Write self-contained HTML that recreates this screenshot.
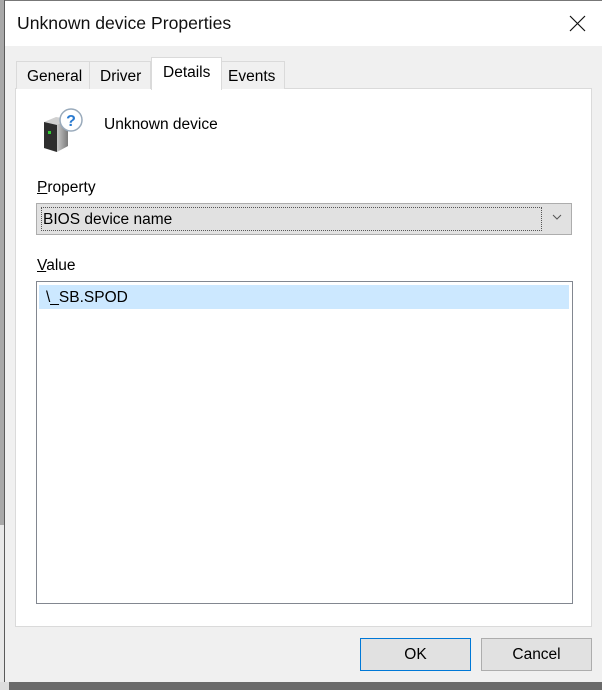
<!DOCTYPE html>
<html><head><style>
*{margin:0;padding:0;box-sizing:border-box}
body{width:602px;height:690px;position:relative;overflow:hidden;background:#f0f0f0;font-family:"Liberation Sans",sans-serif;font-size:15.5px;color:#000}
.a{position:absolute}
</style></head><body>
<div class="a" style="left:0;top:0;width:4px;height:525px;background:#a8a8a8"></div>
<div class="a" style="left:0;top:525px;width:4px;height:165px;background:#e8e8e8"></div>
<div class="a" style="left:4px;top:0;width:1px;height:682px;background:#5a5a5a"></div>
<div class="a" style="left:5px;top:0;width:597px;height:1px;background:#777"></div>
<div class="a" style="left:0;top:682px;width:602px;height:8px;background:#6a6a6a"></div>
<div class="a" style="left:0;top:682px;width:9px;height:8px;background:#ddd"></div>
<div class="a" style="left:5px;top:1px;width:597px;height:45px;background:#fff"></div>
<div class="a" style="left:17px;top:13px;font-size:17.6px;color:#111">Unknown device Properties</div>
<svg class="a" style="left:569px;top:15px" width="17" height="17"><path d="M1 1L16 16M16 1L1 16" stroke="#111" stroke-width="1.2"/></svg>
<div class="a" style="left:5px;top:46px;width:597px;height:636px;background:#f0f0f0"></div>
<div class="a" style="left:15px;top:88px;width:577px;height:539px;background:#fff;border:1px solid #dadada"></div>
<div class="a" style="left:16px;top:61px;width:74px;height:28px;background:#f0f0f0;border:1px solid #dadada;border-bottom:none;padding:6px 0 0 10px">General</div>
<div class="a" style="left:90px;top:61px;width:61px;height:28px;background:#f0f0f0;border:1px solid #dadada;border-bottom:none;border-left:none;padding:6px 0 0 10px">Driver</div>
<div class="a" style="left:222px;top:61px;width:63px;height:28px;background:#f0f0f0;border:1px solid #dadada;border-bottom:none;border-left:none;padding:6px 0 0 6px">Events</div>
<div class="a" style="left:151px;top:57px;width:71px;height:33px;background:#fff;border:1px solid #dadada;border-bottom:none;padding:6px 0 0 11px">Details</div>
<svg class="a" style="left:40px;top:106px" width="46" height="48">
<defs><linearGradient id="g" x1="0" x2="1"><stop offset="0" stop-color="#c8c8c8"/><stop offset="1" stop-color="#7a7a7a"/></linearGradient></defs>
<path d="M4 16 L16 11 L28 13 L28 40 L16 46 L4 42Z" fill="#d0d0d0"/>
<path d="M4 16 L17 19 L17 46 L4 42Z" fill="#2e2e2e"/>
<path d="M17 19 L28 13 L28 40 L17 46Z" fill="url(#g)"/>
<rect x="8" y="25" width="3" height="3" fill="#3c3"/>
<circle cx="31" cy="14" r="11" fill="#fff" stroke="#9ab" stroke-width="1.5"/>
<text x="31" y="20" font-size="16" font-weight="bold" fill="#2a7ad0" text-anchor="middle" font-family="Liberation Sans">?</text>
</svg>
<div class="a" style="left:104px;top:116px">Unknown device</div>
<div class="a" style="left:37px;top:179px"><u>P</u>roperty</div>
<div class="a" style="left:36px;top:203px;width:536px;height:32px;background:#e1e1e1;border:1px solid #adadad"></div>
<div class="a" style="left:41px;top:207px;width:501px;height:24px;border:1px dotted #555;padding:3px 0 0 1px">BIOS device name</div>
<svg class="a" style="left:552px;top:214px" width="10" height="7"><path d="M1 1L5 5L9 1" stroke="#555" fill="none"/></svg>
<div class="a" style="left:37px;top:257px"><u>V</u>alue</div>
<div class="a" style="left:36px;top:281px;width:537px;height:323px;background:#fff;border:1px solid #828790"></div>
<div class="a" style="left:39px;top:285px;width:530px;height:24px;background:#cce8ff;padding:4px 0 0 7px">\_SB.SPOD</div>
<div class="a" style="left:360px;top:638px;width:111px;height:33px;background:#e1e1e1;border:1.5px solid #0078d7;text-align:center;line-height:31px">OK</div>
<div class="a" style="left:481px;top:638px;width:111px;height:33px;background:#e1e1e1;border:1px solid #adadad;text-align:center;line-height:32px">Cancel</div>
</body></html>
